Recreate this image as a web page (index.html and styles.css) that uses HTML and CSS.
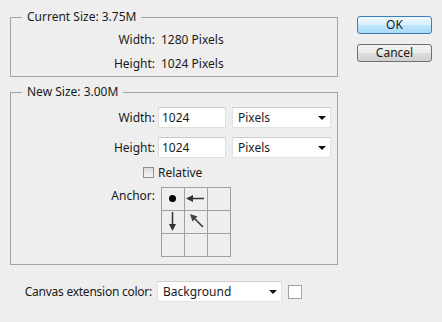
FILE: index.html
```html
<!DOCTYPE html>
<html lang="en">
<head>
    <meta charset="UTF-8">
    <title>Canvas Size</title>
    <link rel="stylesheet" href="styles.css">
</head>
<body>
    <div class="dialog">
        <div class="main">
            <!-- Current size (read only) -->
            <fieldset class="group current">
                <legend>Current Size: 3.75M</legend>
                <div class="rows">
                    <span class="label">Width:</span>
                    <span class="value">1280 Pixels</span>
                    <span class="label">Height:</span>
                    <span class="value">1024 Pixels</span>
                </div>
            </fieldset>

            <!-- New size -->
            <fieldset class="group new">
                <legend>New Size: 3.00M</legend>
                <div class="rows">
                    <label class="label" for="new-width">Width:</label>
                    <div class="field">
                        <input id="new-width" class="num" type="text" value="1024">
                        <div class="select unit">Pixels<span class="caret"></span></div>
                    </div>

                    <label class="label" for="new-height">Height:</label>
                    <div class="field">
                        <input id="new-height" class="num" type="text" value="1024">
                        <div class="select unit">Pixels<span class="caret"></span></div>
                    </div>

                    <span></span>
                    <label class="check"><span class="box"></span>Relative</label>

                    <span class="label anchor-label">Anchor:</span>
                    <div class="anchor">
                        <button class="cell">
                            <svg width="22" height="22" viewBox="0 0 22 22"><circle cx="10.5" cy="10.5" r="3.5" fill="#000"/></svg>
                        </button>
                        <button class="cell">
                            <svg width="22" height="22" viewBox="0 0 22 22"><path d="M7 10.5H19" stroke="#333" stroke-width="1.5"/><path d="M1 10.5L8 7V14Z" fill="#333"/></svg>
                        </button>
                        <button class="cell"></button>
                        <button class="cell">
                            <svg width="22" height="22" viewBox="0 0 22 22"><path d="M10.5 1V14" stroke="#333" stroke-width="1.5"/><path d="M10.5 20L7 13H14Z" fill="#333"/></svg>
                        </button>
                        <button class="cell">
                            <svg width="22" height="22" viewBox="0 0 22 22"><path d="M18 16L9 7" stroke="#333" stroke-width="1.5"/><path d="M5 3L12.5 5.5L7.5 10.5Z" fill="#444"/></svg>
                        </button>
                        <button class="cell"></button>
                        <button class="cell"></button>
                        <button class="cell"></button>
                        <button class="cell"></button>
                    </div>
                </div>
            </fieldset>

            <div class="extension">
                <span class="ext-label">Canvas extension color:</span>
                <div class="select ext">Background<span class="caret"></span></div>
                <span class="swatch"></span>
            </div>
        </div>

        <div class="buttons">
            <button class="btn default">OK</button>
            <button class="btn">Cancel</button>
        </div>
    </div>
</body>
</html>
```

FILE: styles.css
```css
body {
    font-family: "Noto Sans", "Open Sans", sans-serif;
    font-size: 12px;
    background-color: #eeeeee;
    color: #1a1a1a;
    margin: 0;
    padding: 0;
}

.dialog {
    display: flex;
    align-items: flex-start;
    padding: 9px 0 0 10px;
}

.main {
    width: 328px;
}

.group {
    margin: 0;
    border: 1px solid #a3a3a3;
    padding: 0 6px 0 10px;
}

.group legend {
    padding: 0 5px;
    line-height: 16px;
    margin-left: 1px;
}

.new {
    margin-top: 7px;
    padding-top: 7px;
    padding-bottom: 7px;
}

.rows {
    display: grid;
    grid-template-columns: 134px auto;
    column-gap: 3px;
    align-items: center;
}

.current .rows {
    grid-auto-rows: 24px;
    padding: 2px 0 1px;
}

.new .rows {
    row-gap: 9px;
}

.label {
    text-align: right;
}

.value {
    padding-left: 3px;
}

.field {
    display: flex;
    gap: 6px;
}

.num {
    width: 68px;
    height: 21px;
    box-sizing: border-box;
    border: 1px solid #dedede;
    border-top-color: #c9c9c9;
    background: #fff;
    font: inherit;
    color: #1a1a1a;
    padding: 0 3px;
    margin: 0;
    outline: none;
}

.select {
    position: relative;
    height: 21px;
    box-sizing: border-box;
    border: 1px solid #e2e2e2;
    border-top-color: #cfcfcf;
    background: #fff;
    line-height: 19px;
    padding-left: 5px;
}

.unit {
    width: 99px;
}

.caret {
    position: absolute;
    right: 4px;
    top: 8px;
    border-left: 4px solid transparent;
    border-right: 4px solid transparent;
    border-top: 4px solid #111;
}

.check {
    display: flex;
    align-items: center;
    gap: 4px;
    height: 11px;
    margin-left: -15px;
}

.box {
    width: 9px;
    height: 9px;
    border: 1px solid #8e8e8e;
    background: linear-gradient(#dcdcdc, #f6f6f6);
}

.anchor-label {
    align-self: start;
    line-height: 16px;
    padding-top: 1px;
}

.anchor {
    display: grid;
    grid-template-columns: repeat(3, 22px);
    grid-template-rows: repeat(3, 22px);
    gap: 1px;
    width: max-content;
    margin-left: 3px;
    background-color: #a0a0a0;
    border: 1px solid #a0a0a0;
}

.cell {
    display: block;
    width: 22px;
    height: 22px;
    padding: 0;
    border: 0;
    background-color: #eeeeee;
}

.cell svg {
    display: block;
}

.extension {
    display: flex;
    align-items: center;
    margin-top: 16px;
}

.ext-label {
    width: 142px;
    margin-right: 5px;
    text-align: right;
    white-space: nowrap;
    letter-spacing: -0.25px;
}

.ext {
    width: 125px;
}

.swatch {
    width: 12px;
    height: 12px;
    margin-left: 6px;
    border: 1px solid #a3a3a3;
    background: #fff;
}

.buttons {
    display: flex;
    flex-direction: column;
    gap: 10px;
    margin-left: 19px;
    margin-top: 7px;
}

.btn {
    width: 75px;
    height: 18px;
    padding: 0;
    font: inherit;
    font-size: 12px;
    line-height: 16px;
    color: #1a1a1a;
    border: 1px solid #707070;
    border-radius: 3px;
    background: linear-gradient(#f3f3f3 0%, #ebebeb 50%, #dddddd 51%, #cfcfcf 100%);
}

.btn.default {
    border-color: #3c7fb1;
    background: linear-gradient(#eaf6fd 0%, #d9f0fc 50%, #bee6fd 51%, #a7d9f5 100%);
}
```
